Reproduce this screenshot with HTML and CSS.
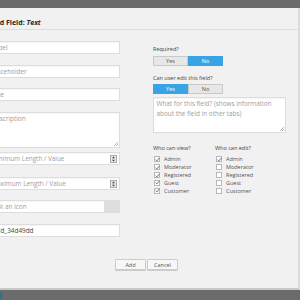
FILE: index.html
```html
<!DOCTYPE html>
<html lang="en">
<head>
<meta charset="utf-8">
<title>Add Field: Text</title>
<link rel="stylesheet" href="styles.css">
</head>
<body>
<div class="modal">
  <div class="modal-header">
    <h1 class="title">Add Field: <em>Text</em></h1>
  </div>
  <div class="modal-body">
    <div class="col-left">
      <input class="field gap-11" placeholder="Label">
      <input class="field gap-11" placeholder="Placeholder">
      <input class="field gap-10" placeholder="Title">
      <div class="ta-wrap gap-11">
        <textarea class="ta" placeholder="Description"></textarea>
        <svg class="grip" width="4" height="4" viewBox="0 0 4 4"><path d="M4 0L0 4M4 2L2 4" stroke="#9a9a9a" stroke-width=".7"/></svg>
      </div>
      <div class="num gap-4">
        <input class="field" placeholder="Minimum Length / Value">
        <svg class="spin" width="7" height="8" viewBox="0 0 7 8"><rect x=".5" y=".5" width="6" height="7" fill="#ececec" stroke="#a8a8a8"/><path d="M3.5 1.6L5 3.3H2Z M3.5 6.4L5 4.7H2Z" fill="#333"/></svg>
      </div>
      <div class="num gap-12">
        <input class="field" placeholder="Maximum Length / Value">
        <svg class="spin" width="7" height="8" viewBox="0 0 7 8"><rect x=".5" y=".5" width="6" height="7" fill="#ececec" stroke="#a8a8a8"/><path d="M3.5 1.6L5 3.3H2Z M3.5 6.4L5 4.7H2Z" fill="#333"/></svg>
      </div>
      <div class="icon-pick gap-10">
        <input class="field icon-input" placeholder="Pick an icon">
        <span class="icon-btn"></span>
      </div>
      <input class="field gap-11" value="field_34d49dd">
    </div>
    <div class="col-right">
      <p class="lbl">Required?</p>
      <div class="toggle t1">
        <span class="seg">Yes</span><span class="seg on">No</span>
      </div>
      <p class="lbl l2">Can user edit this field?</p>
      <div class="toggle t2">
        <span class="seg on">Yes</span><span class="seg">No</span>
      </div>
      <div class="ta-wrap rta">
        <textarea class="ta" placeholder="What for this field? (shows information about the field in other tabs)"></textarea>
        <svg class="grip" width="4" height="4" viewBox="0 0 4 4"><path d="M4 0L0 4M4 2L2 4" stroke="#9a9a9a" stroke-width=".7"/></svg>
      </div>
      <div class="perms">
        <div class="perm-col">
          <p class="lbl perm-head">Who can view?</p>
          <div class="cb-row"><span class="cb"><svg width="5" height="5" viewBox="0 0 5 5"><path d="M.6 2.6L1.9 3.9L4.5.8" fill="none" stroke="#555" stroke-width=".8"/></svg></span>Admin</div>
          <div class="cb-row"><span class="cb"><svg width="5" height="5" viewBox="0 0 5 5"><path d="M.6 2.6L1.9 3.9L4.5.8" fill="none" stroke="#555" stroke-width=".8"/></svg></span>Moderator</div>
          <div class="cb-row"><span class="cb"><svg width="5" height="5" viewBox="0 0 5 5"><path d="M.6 2.6L1.9 3.9L4.5.8" fill="none" stroke="#555" stroke-width=".8"/></svg></span>Registered</div>
          <div class="cb-row"><span class="cb"><svg width="5" height="5" viewBox="0 0 5 5"><path d="M.6 2.6L1.9 3.9L4.5.8" fill="none" stroke="#555" stroke-width=".8"/></svg></span>Guest</div>
          <div class="cb-row"><span class="cb"><svg width="5" height="5" viewBox="0 0 5 5"><path d="M.6 2.6L1.9 3.9L4.5.8" fill="none" stroke="#555" stroke-width=".8"/></svg></span>Customer</div>
        </div>
        <div class="perm-col">
          <p class="lbl perm-head">Who can edit?</p>
          <div class="cb-row"><span class="cb"><svg width="5" height="5" viewBox="0 0 5 5"><path d="M.6 2.6L1.9 3.9L4.5.8" fill="none" stroke="#555" stroke-width=".8"/></svg></span>Admin</div>
          <div class="cb-row"><span class="cb"></span>Moderator</div>
          <div class="cb-row"><span class="cb"></span>Registered</div>
          <div class="cb-row"><span class="cb"></span>Guest</div>
          <div class="cb-row"><span class="cb"></span>Customer</div>
        </div>
      </div>
    </div>
  </div>
  <div class="modal-footer">
    <button class="btn">Add</button>
    <button class="btn">Cancel</button>
  </div>
</div>
<div class="backdrop-bar"><span class="bar-tab"></span></div>
</body>
</html>
```

FILE: styles.css
```css
html, body {
  margin: 0;
  padding: 0;
}
body {
  width: 300px;
  height: 300px;
  overflow: hidden;
  background: #6b6b6b;
  font-family: "Open Sans", sans-serif;
}
.modal {
  box-sizing: border-box;
  margin-left: -18px;
  margin-top: 8px;
  width: 318px;
  height: 282px;
  background: #f1f1f1;
  border-right: 2px solid #dcdcdc;
  border-bottom: 2px solid #c9c9c9;
}
.modal-header {
  padding: 10px 0 1px 8.5px;
  border-bottom: 1px solid #dedede;
}
.title {
  margin: 0;
  font-size: 7px;
  line-height: 10px;
  font-weight: 700;
  color: #23282d;
}
.title em {
  font-style: italic;
}
.modal-body {
  display: flex;
  align-items: flex-start;
  gap: 33px;
  padding: 0 12px 0 5.5px;
}
.col-left {
  width: 132.5px;
  display: flex;
  flex-direction: column;
}
.gap-4 { margin-top: 4px; }
.gap-10 { margin-top: 10px; }
.gap-11 { margin-top: 11px; }
.gap-12 { margin-top: 12px; }
.field {
  box-sizing: border-box;
  display: block;
  width: 100%;
  height: 13px;
  padding: 0 3px;
  border: 1px solid #dddddd;
  border-radius: 0;
  background: #fff;
  font-family: "Open Sans", sans-serif;
  font-size: 6.4px;
  color: #444;
  outline: none;
  box-shadow: inset 0 1px 1px rgba(0,0,0,0.04);
}
.field::placeholder,
.ta::placeholder {
  color: #9e9e9e;
}
.ta-wrap {
  position: relative;
}
.ta {
  box-sizing: border-box;
  display: block;
  width: 100%;
  height: 36px;
  margin: 0;
  padding: 1px 3px;
  border: 1px solid #dddddd;
  border-radius: 0;
  background: #fff;
  font-family: "Open Sans", sans-serif;
  font-size: 6.4px;
  line-height: 10px;
  color: #444;
  resize: none;
  outline: none;
  box-shadow: inset 0 1px 1px rgba(0,0,0,0.04);
}
.grip {
  position: absolute;
  right: 2px;
  bottom: 2px;
}
.num {
  position: relative;
}
.spin {
  position: absolute;
  right: 3px;
  top: 2.5px;
}
.icon-pick {
  display: flex;
}
.icon-input {
  flex: 1;
  width: auto;
}
.icon-btn {
  width: 15px;
  height: 13px;
  background: #dedede;
}
.col-right {
  width: 133px;
  padding-top: 15px;
}
.lbl {
  margin: 0;
  font-size: 5.5px;
  line-height: 8px;
  color: #444;
}
.l2 {
  margin-top: 8px;
}
.toggle {
  display: flex;
  width: 70px;
  height: 10px;
}
.t1 { margin-top: 3px; }
.t2 { margin-top: 2px; }
.seg {
  flex: 1;
  box-sizing: border-box;
  display: flex;
  align-items: center;
  justify-content: center;
  border: 1px solid #c9c9c9;
  background: #e7e7e7;
  color: #555;
  font-size: 5.5px;
}
.seg.on {
  background: #3aa3e3;
  border-color: #3aa3e3;
  color: #fff;
}
.rta {
  margin-top: 3px;
}
.rta .ta {
  padding: 1px 2.5px;
}
.perms {
  display: grid;
  grid-template-columns: 62px 1fr;
  margin-top: 11px;
}
.perm-head {
  margin-bottom: 3.4px;
}
.cb-row {
  display: flex;
  align-items: center;
  height: 7.85px;
  font-size: 5.5px;
  color: #555;
}
.cb {
  box-sizing: border-box;
  width: 6px;
  height: 6px;
  margin: 0 4px 0 1px;
  border: 1px solid #b4b9be;
  background: #fff;
  display: flex;
  align-items: center;
  justify-content: center;
}
.cb svg {
  display: block;
  flex: none;
}
.modal-footer {
  display: flex;
  gap: 1px;
  padding: 22px 0 0 133px;
}
.btn {
  box-sizing: border-box;
  width: 31px;
  height: 11px;
  padding: 0;
  border: 1px solid #cccccc;
  border-radius: 1px;
  background: #f7f7f7;
  box-shadow: 0 1px 0 #cccccc;
  font-family: "Open Sans", sans-serif;
  font-size: 5.5px;
  color: #555;
}
.backdrop-bar {
  padding-top: 2px;
}
.bar-tab {
  display: block;
  width: 2px;
  height: 7px;
  background: #2f7185;
}
```
